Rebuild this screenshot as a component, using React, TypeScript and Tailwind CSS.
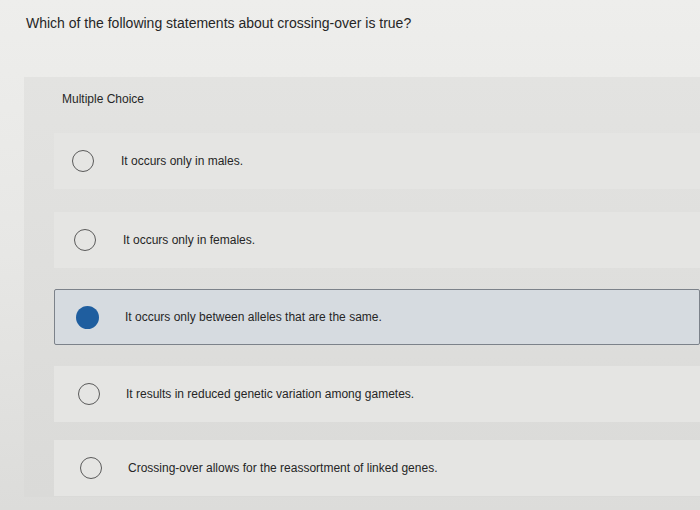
import React from "react";

const options = [
  { text: "It occurs only in males.", pl: "pl-[17px]", gap: "gap-[27px]", mt: "mt-[26px]", selected: false },
  { text: "It occurs only in females.", pl: "pl-[19px]", gap: "gap-[27px]", mt: "mt-[23px]", selected: false },
  { text: "It occurs only between alleles that are the same.", pl: "pl-[21px]", gap: "gap-[26px]", mt: "mt-[21px]", selected: true },
  { text: "It results in reduced genetic variation among gametes.", pl: "pl-[23px]", gap: "gap-[26px]", mt: "mt-[21px]", selected: false },
  { text: "Crossing-over allows for the reassortment of linked genes.", pl: "pl-[25px]", gap: "gap-[26px]", mt: "mt-[18px]", selected: false },
];

const Radio = ({ selected }: { selected: boolean }) =>
  selected ? (
    <span className="block w-[23px] h-[23px] rounded-full bg-[#1f5e9f] shrink-0" />
  ) : (
    <span className="block w-[22px] h-[22px] rounded-full border-[1.5px] border-[#5a5a5a] shrink-0" />
  );

export default function App() {
  return (
    <div className="w-[700px] h-[510px] overflow-hidden bg-gradient-to-b from-[#eeeeec] via-[#e7e7e5] to-[#dcdcda] font-['Liberation_Sans',Arial,sans-serif] text-[#262626]">
      <div className="pt-[15px] pl-[26px] text-[14px] leading-[17px]">
        Which of the following statements about crossing-over is true?
      </div>
      <div className="mt-[45px] ml-[24px] h-[420px] bg-gradient-to-b from-[#e3e3e1] to-[#dadad8] pt-[15px]">
        <div className="pl-[38px] text-[12px] leading-[15px]">Multiple Choice</div>
        {options.map((o) => (
          <div
            key={o.text}
            className={`${o.mt} ml-[30px] h-[56px] flex items-center ${o.pl} ${o.gap} border ${
              o.selected
                ? "bg-[#d6dbe0] border-[#7c828a] rounded-[2px]"
                : "bg-[#e5e5e3] border-transparent"
            }`}
          >
            <Radio selected={o.selected} />
            <span className="text-[12px] leading-[15px]">{o.text}</span>
          </div>
        ))}
      </div>
    </div>
  );
}
